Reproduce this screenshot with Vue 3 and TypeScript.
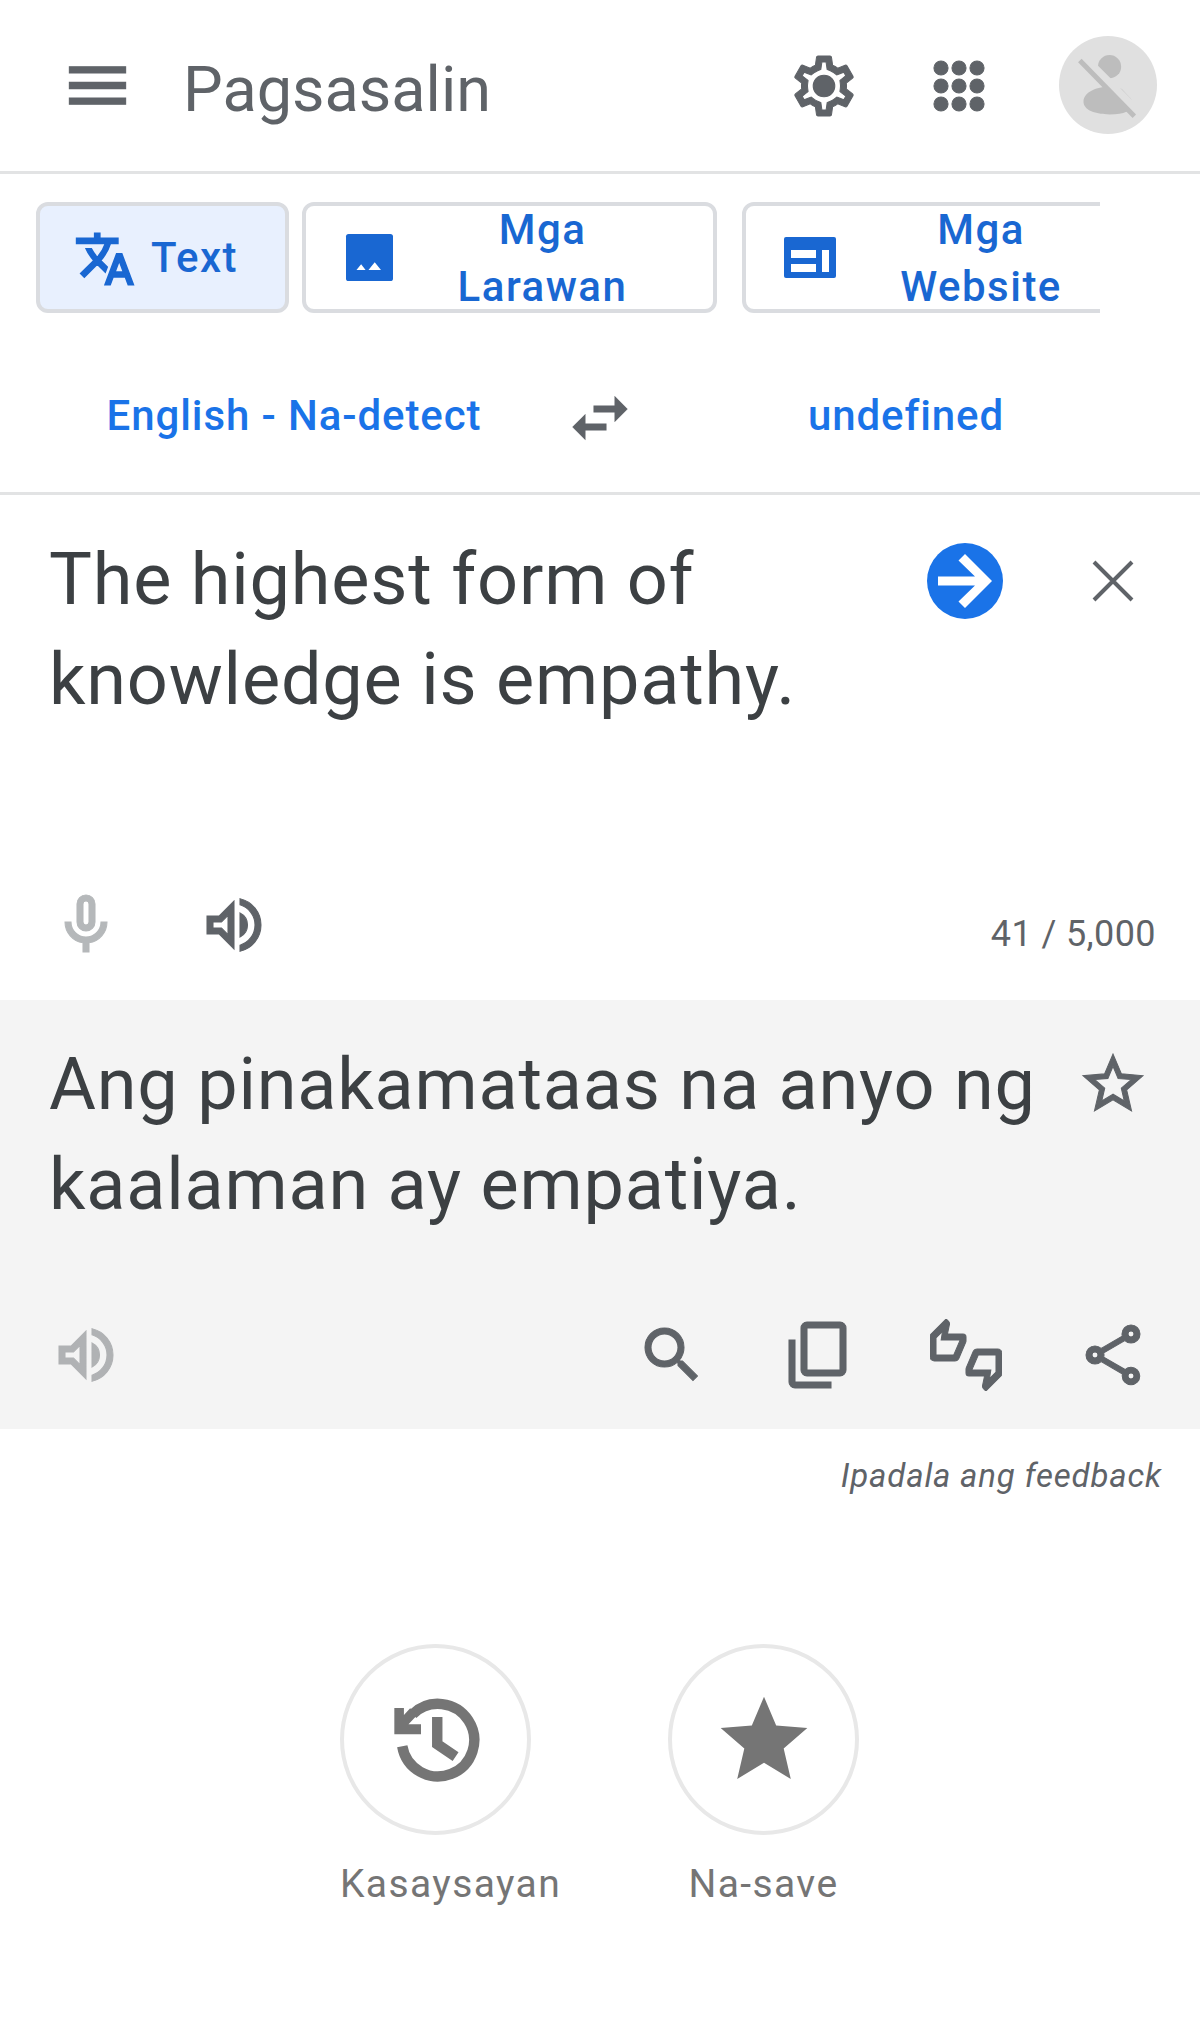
<script setup lang="ts">
const speakerPath = "M3 9v6h4l5 5V4L7 9H3zm7-.17v6.34L7.83 13H5v-2h2.83L10 8.83zM16.5 12c0-1.77-1.02-3.29-2.5-4.03v8.05c1.48-.73 2.5-2.25 2.5-4.02zM14 3.23v2.06c2.89.86 5 3.54 5 6.71s-2.11 5.85-5 6.71v2.06c4.01-.91 7-4.49 7-8.77 0-4.28-2.99-7.86-7-8.77z";
const gearPath = "M19.43 12.98c.04-.32.07-.64.07-.98 0-.34-.03-.66-.07-.98l2.11-1.65c.19-.15.24-.42.12-.64l-2-3.46c-.09-.16-.26-.25-.44-.25-.06 0-.12.01-.17.03l-2.49 1c-.52-.4-1.08-.73-1.69-.98l-.38-2.65C14.46 2.18 14.25 2 14 2h-4c-.25 0-.46.18-.49.42l-.38 2.65c-.61.25-1.17.59-1.69.98l-2.49-1c-.06-.02-.12-.03-.18-.03-.17 0-.34.09-.43.25l-2 3.46c-.13.22-.07.49.12.64l2.11 1.65c-.04.32-.07.65-.07.98 0 .33.03.66.07.98l-2.11 1.65c-.19.15-.24.42-.12.64l2 3.46c.09.16.26.25.44.25.06 0 .12-.01.17-.03l2.49-1c.52.4 1.08.73 1.69.98l.38 2.65c.03.24.24.42.49.42h4c.25 0 .46-.18.49-.42l.38-2.65c.61-.25 1.17-.59 1.69-.98l2.49 1c.06.02.12.03.18.03.17 0 .34-.09.43-.25l2-3.46c.12-.22.07-.49-.12-.64l-2.11-1.65zm-1.98-1.71c.04.31.05.52.05.73 0 .21-.02.43-.05.73l-.14 1.13.89.7 1.08.84-.7 1.21-1.27-.51-1.04-.42-.9.68c-.43.32-.84.56-1.25.73l-1.06.43-.16 1.13-.2 1.35h-1.4l-.19-1.35-.16-1.13-1.06-.43c-.43-.18-.83-.41-1.23-.71l-.91-.7-1.06.43-1.27.51-.7-1.21 1.08-.84.89-.7-.14-1.13c-.03-.31-.05-.54-.05-.74s.02-.43.05-.73l.14-1.13-.89-.7-1.08-.84.7-1.21 1.27.51 1.04.42.9-.68c.43-.32.84-.56 1.25-.73l1.06-.43.16-1.13.2-1.35h1.39l.19 1.35.16 1.13 1.06.43c.43.18.83.41 1.23.71l.91.7 1.06-.43 1.27-.51.7 1.21-1.07.85-.89.7.14 1.13z";
const translatePath = "M12.87 15.07l-2.54-2.51.03-.03c1.74-1.94 2.98-4.17 3.71-6.53H17V4h-7V2H8v2H1v1.99h11.17C11.5 7.92 10.44 9.75 9 11.35 8.07 10.32 7.3 9.19 6.69 8h-2c.73 1.63 1.73 3.17 2.98 4.56l-5.09 5.02L4 19l5-5 3.11 3.11.76-2.04zM18.5 10h-2L12 22h2l1.12-3h4.75L21 22h2l-4.5-12zm-2.62 7l1.62-4.33L19.12 17h-3.24z";
const micPath = "M12 14c1.66 0 3-1.34 3-3V5c0-1.66-1.34-3-3-3S9 3.34 9 5v6c0 1.66 1.34 3 3 3zm-1-9c0-.55.45-1 1-1s1 .45 1 1v6c0 .55-.45 1-1 1s-1-.45-1-1V5zm6 6c0 2.76-2.24 5-5 5s-5-2.24-5-5H5c0 3.53 2.61 6.43 6 6.92V21h2v-3.08c3.39-.49 6-3.39 6-6.92h-2z";
const starOutline = "M22 9.24l-7.19-.62L12 2 9.19 8.63 2 9.24l5.46 4.73L5.82 21 12 17.27 18.18 21l-1.63-7.03L22 9.24zM12 15.4l-3.76 2.27 1-4.28-3.32-2.88 4.38-.38L12 6.1l1.71 4.04 4.38.38-3.32 2.88 1 4.28L12 15.4z";
const starFilled = "M12 17.27L18.18 21l-1.64-7.03L22 9.24l-7.19-.61L12 2 9.19 8.63 2 9.24l5.46 4.73L5.82 21z";
const searchPath = "M15.5 14h-.79l-.28-.27C15.41 12.59 16 11.11 16 9.5 16 5.91 13.09 3 9.5 3S3 5.91 3 9.5 5.91 16 9.5 16c1.61 0 3.09-.59 4.23-1.57l.27.28v.79l5 4.99L20.49 19l-4.99-5zm-6 0C7.01 14 5 11.99 5 9.5S7.01 5 9.5 5 14 7.01 14 9.5 11.99 14 9.5 14z";
const copyPath = "M16 1H4c-1.1 0-2 .9-2 2v14h2V3h12V1zm3 4H8c-1.1 0-2 .9-2 2v14c0 1.1.9 2 2 2h11c1.1 0 2-.9 2-2V7c0-1.1-.9-2-2-2zm0 16H8V7h11v14z";
const thumbsPath = "M12 6c0-.55-.45-1-1-1H5.82l.66-3.18.02-.23c0-.31-.13-.59-.33-.8L5.38 0 .44 4.94C.17 5.21 0 5.59 0 6v6.5c0 .83.67 1.5 1.5 1.5h6.75c.62 0 1.15-.38 1.38-.91l2.26-5.29c.07-.17.11-.36.11-.55V6zm-2 1.13L7.92 12H2V6.32l2.17-2.17L3.73 7H10v.13zM22.5 10h-6.75c-.62 0-1.15.38-1.38.91l-2.26 5.29c-.07.17-.11.36-.11.55V18c0 .55.45 1 1 1h5.18l-.66 3.18-.02.24c0 .31.13.59.33.8l.79.78 4.94-4.94c.27-.27.44-.65.44-1.06v-6.5c0-.83-.67-1.5-1.5-1.5zm-.5 7.68l-2.17 2.17.44-2.85H14v-.13L16.08 12H22v5.68z";
const sharePath = "M18 16.08c-.76 0-1.44.3-1.96.77L8.91 12.7c.05-.23.09-.46.09-.7s-.04-.47-.09-.7l7.05-4.11c.54.5 1.25.81 2.04.81 1.66 0 3-1.34 3-3s-1.34-3-3-3-3 1.34-3 3c0 .24.04.47.09.7L8.04 9.81C7.5 9.31 6.79 9 6 9c-1.66 0-3 1.34-3 3s1.34 3 3 3c.79 0 1.5-.31 2.04-.81l7.12 4.16c-.05.21-.08.43-.08.65 0 1.61 1.31 2.92 2.92 2.92s2.92-1.31 2.92-2.92c0-1.61-1.31-2.92-2.92-2.92zM18 4c.55 0 1 .45 1 1s-.45 1-1 1-1-.45-1-1 .45-1 1-1zM6 13c-.55 0-1-.45-1-1s.45-1 1-1 1 .45 1 1-.45 1-1 1zm12 7.02c-.55 0-1-.45-1-1s.45-1 1-1 1 .45 1 1-.45 1-1 1z";
const appDots: number[][] = [6, 12, 18].flatMap((y) => [6, 12, 18].map((x) => [x, y]));
</script>

<template>
  <div class="page">
    <header class="topbar">
      <svg class="ic menu" viewBox="0 0 24 24"><path d="M3 18h18v-2H3v2zm0-5h18v-2H3v2zm0-7v2h18V6H3z" /></svg>
      <span class="title">Pagsasalin</span>
      <svg class="ic gear" viewBox="0 0 24 24"><path :d="gearPath" /><circle cx="12" cy="12" r="3.6" /></svg>
      <svg class="ic apps" viewBox="0 0 24 24"><circle v-for="d in appDots" :key="d.join()" :cx="d[0]" :cy="d[1]" r="2.35" /></svg>
      <div class="avatar">
        <svg viewBox="0 0 32 32" width="98" height="98">
          <circle cx="16.500" cy="10" r="3.800" fill="#bdbdbd" />
          <path d="M8 21.500c0-3.500 5-5 8.500-5 2 0 3 .3 4 .8l3 3.200c1 1.600 0 3.500-1.500 4.200-1.200.6-3 .9-5.500.9-4.500 0-8.500-1.300-8.500-4.100z" fill="#bdbdbd" />
          <line x1="7.500" y1="7" x2="25.500" y2="25" stroke="#e0e0e0" stroke-width="3.600" />
          <line x1="6.800" y1="8" x2="24.600" y2="26.200" stroke="#bdbdbd" stroke-width="1.600" />
        </svg>
      </div>
    </header>

    <nav class="tabs">
      <div class="tab active first">
        <svg class="tab-translate" viewBox="0 0 24 24"><path :d="translatePath" /></svg>
        <span class="tab-text">Text</span>
      </div>
      <div class="tab second">
        <svg class="tab-image" viewBox="0 0 18 18">
          <rect width="18" height="18" rx="1" fill="#1967d2" />
          <path d="M4 13.800l1.800-2.200 1.700 2.200zM8.600 13.800l2.400-3 2.400 3z" fill="#fff" />
        </svg>
        <span class="tab-label">Mga<br />Larawan</span>
      </div>
      <div class="tab third">
        <svg class="tab-web" viewBox="0 0 52 41">
          <rect width="52" height="41" rx="2" fill="#1967d2" />
          <rect x="7" y="13" width="25" height="8" fill="#fff" />
          <rect x="7" y="27" width="25" height="8" fill="#fff" />
          <rect x="38" y="13" width="7" height="22" fill="#fff" />
        </svg>
        <span class="tab-label">Mga<br />Website</span>
      </div>
    </nav>

    <div class="langs">
      <span class="lang">English - Na-detect</span>
      <svg class="ic swap" viewBox="0 0 24 24"><path d="M6.990 11L3 15l3.990 4v-3H14v-2H6.990v-3zM21 9l-3.990-4v3H10v2h7.010v3L21 9z" /></svg>
      <span class="lang">undefined</span>
    </div>

    <section class="source">
      <div class="text-row">
        <p class="big-text">The highest form of knowledge is empathy.</p>
        <svg class="go" viewBox="0 0 76 76">
          <circle cx="38" cy="38" r="38" fill="#1a73e8" />
          <path d="M38 11l-6.500 6.500L48 33.500H11v9h37L31.500 58.500 38 65l27-27z" fill="#fff" />
        </svg>
        <svg class="close" viewBox="0 0 44 44"><path d="M3 3l38 38M41 3L3 41" /></svg>
      </div>
      <div class="source-tools">
        <svg class="ic mic" viewBox="0 0 24 24"><path :d="micPath" /></svg>
        <svg class="ic speak" viewBox="0 0 24 24"><path :d="speakerPath" /></svg>
        <span class="count">41 / 5,000</span>
      </div>
    </section>

    <section class="result">
      <div class="text-row">
        <p class="big-text">Ang pinakamataas na anyo ng kaalaman ay empatiya.</p>
        <svg class="ic star" viewBox="0 0 24 24"><path :d="starOutline" /></svg>
      </div>
      <div class="result-tools">
        <svg class="ic faded" viewBox="0 0 24 24"><path :d="speakerPath" /></svg>
        <svg class="ic push" viewBox="0 0 24 24"><path :d="searchPath" /></svg>
        <svg class="ic" viewBox="0 0 24 24"><path :d="copyPath" transform="matrix(1 0 0 -1 0 24)" /></svg>
        <svg class="ic" viewBox="0 0 24 24"><path :d="thumbsPath" /></svg>
        <svg class="ic" viewBox="0 0 24 24"><path :d="sharePath" /></svg>
      </div>
    </section>

    <div class="feedback">Ipadala ang feedback</div>

    <div class="shortcuts">
      <div class="shortcut">
        <div class="ring">
          <svg class="ring-ic" viewBox="0 0 24 24">
            <path d="M3.900 13.500A8.700 8.700 0 1 0 6.400 5.800" fill="none" stroke="#757575" stroke-width="2.500" />
            <path d="M2 4.300v6.300h6.400V8.200H5.400L7.500 6 5.800 4.400 4.300 6V4.300z" fill="#757575" />
            <path d="M12.300 6.500V13l4.400 3" fill="none" stroke="#757575" stroke-width="2.500" />
          </svg>
        </div>
        <span class="shortcut-label hist">Kasaysayan</span>
      </div>
      <div class="shortcut">
        <div class="ring">
          <svg class="ring-ic star-ic" viewBox="0 0 24 24"><path :d="starFilled" fill="#757575" /></svg>
        </div>
        <span class="shortcut-label">Na-save</span>
      </div>
    </div>
  </div>
</template>

<style scoped>
.page {
  width: 1200px;
  height: 2041px;
  background: #fff;
  font-family: Roboto, "Liberation Sans", sans-serif;
  color: #3c4043;
  overflow: hidden;
}

.ic {
  width: 72px;
  height: 72px;
  fill: #5f6368;
  stroke: #5f6368;
  stroke-width: 0.35;
  flex: none;
}

.topbar {
  height: 171px;
  border-bottom: 3px solid #e2e3e4;
  display: flex;
  align-items: center;
  padding: 0 43px 0 60px;
}

.menu {
  width: 75px;
  height: 75px;
}

.title {
  font-size: 63px;
  color: #5f6368;
  margin-left: 48px;
  margin-top: 8px;
  flex: 1;
}

.gear {
  margin-right: 63px;
}

.apps {
  margin-right: 64px;
}

.avatar {
  width: 98px;
  height: 98px;
  border-radius: 50%;
  background: #e0e0e0;
  display: flex;
  margin-top: -2px;
}

.tabs {
  margin: 28px 0 0 36px;
  width: 1064px;
  height: 111px;
  display: flex;
  gap: 13px;
  overflow: hidden;
}

.tab {
  flex: none;
  box-sizing: border-box;
  height: 111px;
  border: 4px solid #dadce0;
  border-radius: 12px;
  display: flex;
  align-items: center;
  color: #1967d2;
  font-weight: 500;
  font-size: 42px;
}

.active {
  background: #e8f0fe;
}

.first {
  width: 253px;
}

.second {
  width: 415px;
}

.third {
  width: 400px;
  margin-left: 12px;
}

.tab-translate {
  width: 62px;
  height: 62px;
  fill: #1967d2;
  stroke: #1967d2;
  stroke-width: 0.6;
  margin-left: 34px;
  margin-top: 2px;
}

.tab-text {
  margin-left: 15px;
  letter-spacing: 1.4px;
}

.tab-image {
  width: 49px;
  height: 47px;
  margin-left: 39px;
  flex: none;
}

.tab-web {
  width: 52px;
  height: 41px;
  margin-left: 38px;
  flex: none;
}

.tab-label {
  flex: 1;
  text-align: center;
  line-height: 57px;
  letter-spacing: 1.5px;
}

.second .tab-label {
  padding-right: 22px;
}

.third .tab-label {
  padding-left: 14px;
  padding-right: 26px;
}

.langs {
  margin-top: 63px;
  padding: 0 24px 6px;
  display: grid;
  grid-template-columns: 1fr 72px 1fr;
  align-items: center;
  height: 76px;
  color: #1a73e8;
  font-size: 42px;
  font-weight: 500;
  letter-spacing: 0.9px;
}

.swap {
  margin-top: 6px;
}

.lang {
  text-align: center;
}

.source {
  margin-top: 34px;
  border-top: 3px solid #e2e3e4;
  height: 508px;
  box-sizing: border-box;
  display: flex;
  flex-direction: column;
  justify-content: space-between;
  padding-bottom: 39px;
}

.text-row {
  display: flex;
  align-items: flex-start;
  padding: 35px 50px 0 49px;
}

.big-text {
  margin: 0;
  flex: 1;
  font-size: 72px;
  line-height: 100px;
  color: #3c4043;
  letter-spacing: 0.8px;
}

.go {
  width: 76px;
  height: 76px;
  flex: none;
  margin: 13px 88px 0 0;
}

.close {
  width: 44px;
  height: 44px;
  flex: none;
  margin: 29px 15px 0 0;
  fill: none;
  stroke: #5f6368;
  stroke-width: 4;
}

.source-tools {
  display: flex;
  align-items: center;
  padding: 0 44px 0 50px;
}

.mic {
  fill: #b5b8ba;
  stroke: #b5b8ba;
}

.speak {
  margin-left: 76px;
}

.count {
  margin-left: auto;
  font-size: 36px;
  color: #5f6368;
  padding-top: 17px;
  letter-spacing: 0.4px;
}

.result {
  background: #f4f4f4;
  height: 429px;
  display: flex;
  flex-direction: column;
  justify-content: space-between;
  padding-bottom: 38px;
  box-sizing: border-box;
}

.result .text-row {
  padding-right: 51px;
  padding-top: 35px;
}

.star {
  margin-top: 13px;
}

.result-tools {
  display: flex;
  align-items: center;
  padding: 0 51px 0 50px;
  gap: 75px;
}

.faded {
  fill: #b0b2b4;
  stroke: #b0b2b4;
}

.push {
  margin-left: auto;
}

.feedback {
  text-align: right;
  padding: 27px 38px 0 0;
  font-size: 33px;
  font-style: italic;
  color: #5f6368;
  letter-spacing: 0.8px;
}

.shortcuts {
  margin-top: 149px;
  display: flex;
  padding-left: 340px;
}

.shortcut {
  display: flex;
  flex-direction: column;
  width: 328px;
}

.ring {
  box-sizing: border-box;
  width: 191px;
  height: 191px;
  border: 4px solid #e8e8e8;
  border-radius: 50%;
  display: flex;
  align-items: center;
  justify-content: center;
}

.ring-ic {
  width: 100px;
  height: 100px;
}

.star-ic {
  width: 104px;
  height: 104px;
}

.shortcut-label {
  margin-top: 26px;
  font-size: 39px;
  color: #757575;
  width: 191px;
  text-align: center;
  letter-spacing: 1.4px;
}

.hist {
  width: auto;
  text-align: left;
}
</style>

<style>
html,
body {
  margin: 0;
  background: #fff;
}
</style>
